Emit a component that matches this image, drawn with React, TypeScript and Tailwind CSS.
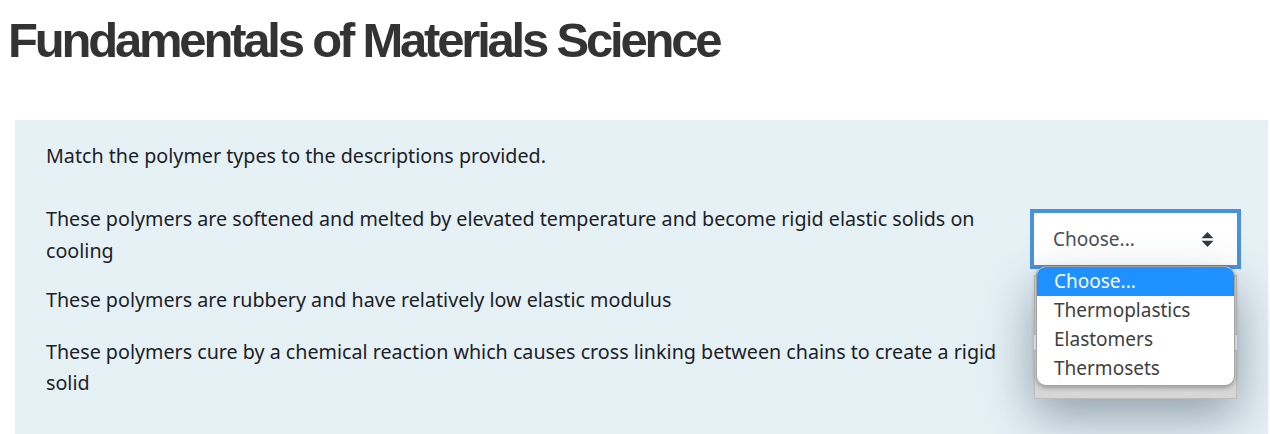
import React from "react"

const rows = [
    { id: 1, text: "These polymers are softened and melted by elevated temperature and become rigid elastic solids on cooling" },
    { id: 2, text: "These polymers are rubbery and have relatively low elastic modulus" },
    { id: 3, text: "These polymers cure by a chemical reaction which causes cross linking between chains to create a rigid solid" },
]

const options = ["Choose...", "Thermoplastics", "Elastomers", "Thermosets"]

function Caret() {
    return (
        <svg width="13" height="17" viewBox="0 0 13 17" className="shrink-0">
            <path d="M6.5 1 L12.5 7.3 H0.5 Z" fill="#343a40" />
            <path d="M6.5 16 L12.5 9.7 H0.5 Z" fill="#343a40" />
        </svg>
    )
}

function FocusedSelect() {
    return (
        <div className="relative">
            <div className="h-[60px] w-[211px] border-4 border-[#4a92d9] bg-white flex items-center justify-between pl-[19px] pr-[23px] text-[19px] text-[#495057]">
                <span>Choose...</span>
                <Caret />
            </div>
            <div className="absolute left-[6px] top-[57px] z-10 w-[199px] rounded-[10px] border border-[#a3a3a3] bg-white overflow-hidden shadow-[0_2px_5px_rgba(0,0,0,0.3)] pb-[2px] text-[19px]">
                {options.map((o, i) => (
                    <div
                        key={o}
                        className={
                            i === 0
                                ? "h-[29px] leading-[29px] pl-[17px] bg-[#1e90ff] text-white"
                                : "h-[29px] leading-[29px] pl-[17px] text-[#404040]"
                        }
                    >
                        {o}
                    </div>
                ))}
            </div>
        </div>
    )
}

export default function App() {
    return (
        <div className="bg-white w-[1270px] h-[434px] overflow-hidden" style={{ fontFamily: '"Noto Sans", sans-serif' }}>
            <h1
                className="pl-[8px] pt-[11px] text-[49px] leading-[58px] font-bold text-[#333333] tracking-[-3.2px]"
                style={{ fontFamily: '"Liberation Sans", Arial, sans-serif' }}
            >
                Fundamentals of Materials Science
            </h1>

            <div className="mt-[51px] ml-[15px] mr-[2px] bg-[#e6f1f6] pl-[31px] pr-[31px] pt-[20px] pb-[36px] text-[19.7px] text-[#1d2125]">
                <p className="leading-[32px] mb-[31px]">Match the polymer types to the descriptions provided.</p>

                <div className="relative">
                    <div className="flex items-start justify-between">
                        <p className="w-[975px] leading-[32px]">{rows[0].text}</p>
                        <div className="mt-[6px] mr-[-4px]">
                            <FocusedSelect />
                        </div>
                    </div>

                    <div className="flex items-start justify-between mt-[15px]">
                        <p className="w-[975px] leading-[32px]">{rows[1].text}</p>
                    </div>

                    <div className="flex items-start justify-between mt-[20px]">
                        <p className="w-[975px] leading-[31px]">{rows[2].text}</p>
                    </div>

                    <div className="absolute right-[0px] top-[72px] w-[203px] flex flex-col shadow-[0_16px_50px_rgba(50,70,90,0.5)]">
                        <div className="h-[60px] border border-[#bdbdbd] bg-[#dcdcdc]" />
                        <div className="h-[15px]" />
                        <div className="h-[49px] border border-[#bdbdbd] bg-gradient-to-b from-[#e2e2e2] to-[#d6d6d6]" />
                    </div>
                </div>
            </div>
        </div>
    )
}
